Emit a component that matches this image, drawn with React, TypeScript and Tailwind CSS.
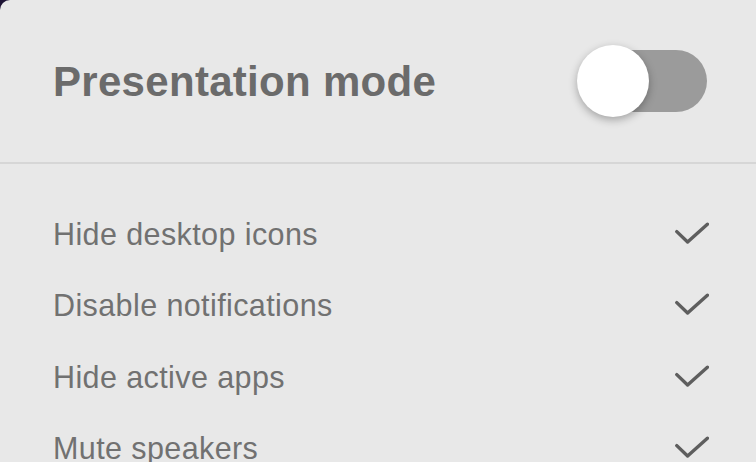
import React from "react";

const items = [
  "Hide desktop icons",
  "Disable notifications",
  "Hide active apps",
  "Mute speakers",
];

const Check: React.FC = () => (
  <svg width="34" height="24" viewBox="0 0 34 24" fill="none">
    <path
      d="M1.8 9.6 L12.6 20 L32.4 2.2"
      stroke="#5e5e5e"
      strokeWidth="3.4"
      strokeLinecap="round"
      strokeLinejoin="round"
    />
  </svg>
);

const App: React.FC = () => {
  return (
    <div
      className="w-full h-[462px] overflow-hidden bg-[#1d1334]"
      style={{ fontFamily: '"Liberation Sans", Arial, sans-serif' }}
    >
      <div className="h-full bg-[#e8e8e8] rounded-tl-[10px]">
        {/* Encabezado */}
        <div className="h-[162px] flex items-center justify-between pl-[53px] pr-[49px]">
          <h1 className="text-[42px] leading-none font-bold tracking-[0.3px] text-[#6b6b6b] pt-[2px]">
            Presentation mode
          </h1>
          <div className="relative w-[130px] h-[72px]">
            <div className="absolute right-0 top-[5px] w-[120px] h-[62px] rounded-full bg-[#9b9b9b]" />
            <div className="absolute left-0 top-0 w-[72px] h-[72px] rounded-full bg-white shadow-[0_3px_8px_rgba(0,0,0,0.3)]" />
          </div>
        </div>

        <div className="h-[2px] bg-[#d6d6d6]" />

        {/* Opciones */}
        <div className="pt-[34px] pl-[53px] pr-[47px]">
          {items.map((item) => (
            <div key={item} className="h-[71.5px] flex items-center justify-between">
              <span className="text-[30.5px] leading-none tracking-[0.4px] text-[#717171]">{item}</span>
              <Check />
            </div>
          ))}
        </div>
      </div>
    </div>
  );
};

export default App;
